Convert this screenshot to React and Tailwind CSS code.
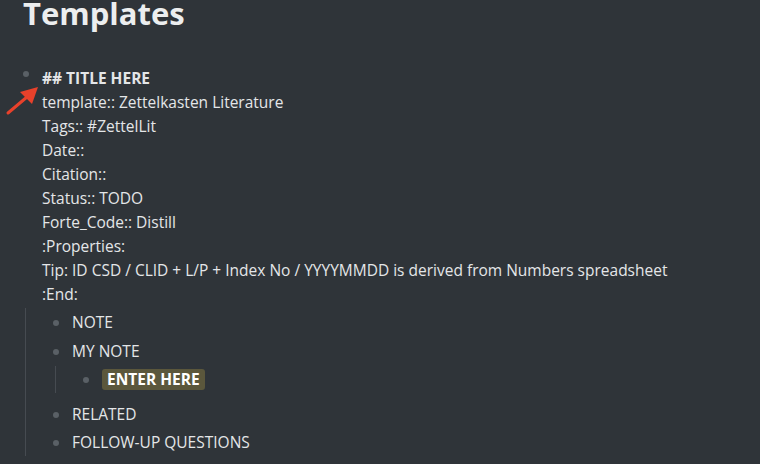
const props = [
  "template:: Zettelkasten Literature",
  "Tags:: #ZettelLit",
  "Date::",
  "Citation::",
  "Status:: TODO",
  "Forte_Code:: Distill",
  ":Properties:",
  "Tip: ID CSD / CLID + L/P + Index No / YYYYMMDD is derived from Numbers spreadsheet",
  ":End:",
];

function Row({ children, h = "h-[29px]" }) {
  return (
    <div className={`flex items-center ${h}`}>
      <span className="ml-[27px] mr-[13px] h-[6px] w-[6px] shrink-0 rounded-full bg-[#5a6066]" />
      {children}
    </div>
  );
}

export default function App() {
  return (
    <div
      className="relative h-[464px] w-[760px] overflow-hidden bg-[#2f3439] text-[#e4e6e8]"
      style={{ fontFamily: '"Open Sans", "Noto Sans", sans-serif' }}
    >
      <h1 className="-mt-[9px] ml-[23px] text-[31px] font-bold leading-[44px] text-[#eceeef]">
        Templates
      </h1>

      <div className="ml-[10px] mt-[31px] text-[15.5px]">
        <div className="flex">
          <div className="flex h-[24px] w-[32px] shrink-0 items-start justify-center pt-[5px]">
            <span className="h-[6px] w-[6px] rounded-full bg-[#5a6066]" />
          </div>
          <div className="leading-[24px]">
            <div className="font-bold">## TITLE HERE</div>
            {props.map((p) => (
              <div key={p}>{p}</div>
            ))}
          </div>
        </div>

        <div className="ml-[15px] mt-[2px] border-l border-[#464b51]">
          <Row>NOTE</Row>
          <Row>MY NOTE</Row>
          <div className="ml-[29px] border-l border-[#464b51]">
            <Row h="h-[27px]">
              <span className="rounded-[3px] bg-[#5b573c] px-[5px] font-bold leading-[21px] text-white">
                ENTER HERE
              </span>
            </Row>
          </div>
          <div className="h-[7px]" />
          <Row>RELATED</Row>
          <Row h="h-[27px]">FOLLOW-UP QUESTIONS</Row>
        </div>
      </div>

      <svg
        className="absolute left-[5px] top-[83px]"
        width="36"
        height="34"
        viewBox="0 0 36 34"
      >
        <line x1="3" y1="30" x2="22" y2="14" stroke="#e8412b" strokeWidth="3" strokeLinecap="round" />
        <polygon points="33,4 15,9 27,21" fill="#e8412b" />
      </svg>
    </div>
  );
}
